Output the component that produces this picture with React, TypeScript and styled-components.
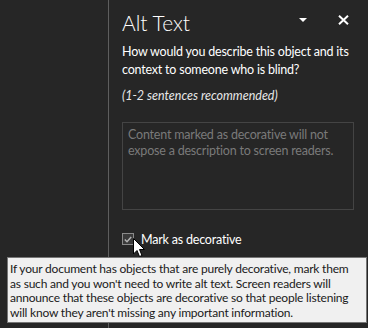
import styled, { createGlobalStyle } from 'styled-components';

const GlobalStyle = createGlobalStyle`
  html, body {
    margin: 0;
    padding: 0;
    background: #262626;
  }
  body {
    font-family: Lato, "Open Sans", sans-serif;
    color: #ffffff;
  }
`;

const Page = styled.div`
  position: relative;
  display: flex;
  width: 368px;
  height: 328px;
  overflow: hidden;
  background: #262626;
`;

const LeftPane = styled.div`
  width: 108px;
  flex: none;
  border-right: 1px solid #5e5e5e;
`;

const Panel = styled.div`
  flex: 1;
  display: flex;
  flex-direction: column;
  padding: 9px 14px 0 13px;
`;

const Header = styled.div`
  display: flex;
  align-items: flex-start;
  gap: 24px;
  padding-right: 3px;
  height: 28px;
`;

const Title = styled.div`
  flex: 1;
  font-size: 21px;
  line-height: 28px;
  font-weight: 300;
`;

const IconButton = styled.div`
  width: 16px;
  height: 22px;
  display: flex;
  justify-content: center;
  align-items: center;
`;

const Question = styled.div`
  margin-top: 6px;
  font-size: 12.5px;
  letter-spacing: -0.2px;
  line-height: 18px;
`;

const Hint = styled.div`
  margin-top: 8px;
  font-size: 12.5px;
  font-style: italic;
  line-height: 18px;
  color: #e8e8e8;
`;

const TextBox = styled.div`
  margin-top: 17px;
  height: 82px;
  border: 1px solid #444444;
  padding: 4px 5px 0;
  font-size: 12.5px;
  letter-spacing: -0.2px;
  line-height: 16px;
  color: #7a7a7a;
`;

const CheckRow = styled.div`
  margin-top: 20px;
  height: 18px;
  display: flex;
  align-items: center;
  gap: 7px;
  font-size: 12.5px;
  letter-spacing: -0.2px;
`;

const Box = styled.div`
  width: 10px;
  height: 10px;
  border: 1px solid #8a8a8a;
  background: #3a3a3a;
  display: flex;
  align-items: center;
  justify-content: center;
`;

const Cursor = styled.svg`
  position: absolute;
  left: 133px;
  top: 238px;
`;

const Tooltip = styled.div`
  position: absolute;
  left: 7px;
  top: 257px;
  width: 356px;
  padding: 4px 0 2px 2px;
  background: #f0f0f0;
  border: 1px solid #767676;
  color: #1a1a1a;
  font-size: 12px;
  letter-spacing: -0.2px;
  line-height: 14.5px;
  white-space: nowrap;
  overflow: hidden;
`;

export default function App() {
  return (
    <>
      <GlobalStyle />
      <Page>
        <LeftPane />
        <Panel>
          <Header>
            <Title>Alt Text</Title>
            <IconButton>
              <svg width="8" height="4" viewBox="0 0 8 4">
                <path d="M0 0 H8 L4 4 Z" fill="#ffffff" />
              </svg>
            </IconButton>
            <IconButton>
              <svg width="11" height="10" viewBox="0 0 11 10">
                <path d="M1 0.8 L10 9.2 M10 0.8 L1 9.2" stroke="#ffffff" strokeWidth="2" />
              </svg>
            </IconButton>
          </Header>
          <Question>
            How would you describe this object and its context to someone who is blind?
          </Question>
          <Hint>(1-2 sentences recommended)</Hint>
          <TextBox>
            Content marked as decorative will not expose a description to screen readers.
          </TextBox>
          <CheckRow>
            <Box>
              <svg width="8" height="7" viewBox="0 0 8 7">
                <path d="M0.8 3.5 L3 5.7 L7.2 1" stroke="#b4b4b4" strokeWidth="1.5" fill="none" />
              </svg>
            </Box>
            Mark as decorative
          </CheckRow>
        </Panel>
        <Cursor width="12" height="20" viewBox="0 0 12 20">
          <path
            d="M0.5 0.5 L0.5 16 L4 12.5 L6.5 18.5 L9 17.5 L6.5 11.5 L11.5 11.5 Z"
            fill="#ffffff"
            stroke="#000000"
            strokeWidth="1"
          />
        </Cursor>
        <Tooltip>
          If your document has objects that are purely decorative, mark them
          <br />
          as such and you won't need to write alt text. Screen readers will
          <br />
          announce that these objects are decorative so that people listening
          <br />
          will know they aren't missing any important information.
        </Tooltip>
      </Page>
    </>
  );
}
